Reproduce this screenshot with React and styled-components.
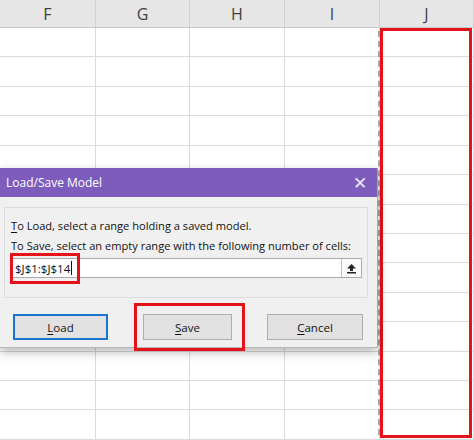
import React from 'react';
import styled, { createGlobalStyle } from 'styled-components';

const GlobalStyle = createGlobalStyle`
  html, body { margin: 0; padding: 0; background: #fff; overflow: hidden; }
  * { box-sizing: border-box; }
`;

const columns = ['F', 'G', 'H', 'I', 'J'];
const colTemplate = '96px 94px 95px 95px 94px';
const ROWS = 14;

const Sheet = styled.div`
  position: relative;
  width: 474px;
  height: 440px;
  overflow: hidden;
  font-family: "Open Sans", "Noto Sans", sans-serif;
`;

const HeaderRow = styled.div`
  display: grid;
  grid-template-columns: ${colTemplate};
  height: 28px;
  background: #e6e6e6;
  border-bottom: 1px solid #c9c9c9;
`;

const HeaderCell = styled.div`
  display: flex;
  align-items: center;
  justify-content: center;
  border-right: 1px solid #d2d2d2;
  font-size: 16px;
  color: #404040;
`;

const Grid = styled.div`
  display: grid;
  grid-template-columns: ${colTemplate};
  grid-auto-rows: 29.43px;
`;

const Cell = styled.div`
  border-right: 1px solid #dadada;
  border-bottom: 1px solid #dadada;
`;

const Selection = styled.div`
  position: absolute;
  left: 380px;
  top: 28px;
  width: 92px;
  height: 410px;
  border: 3px solid #e5121a;
  &::before {
    content: '';
    position: absolute;
    left: -5px;
    top: 0;
    bottom: 0;
    border-left: 2px dashed #b0a0a0;
  }
`;

const Dialog = styled.div`
  position: absolute;
  left: 0;
  top: 168px;
  width: 378px;
  height: 180px;
  background: #f0f0f0;
  border-right: 1px solid #a89cc0;
  border-bottom: 1px solid #b8b8b8;
  box-shadow: 0 4px 10px rgba(0, 0, 0, 0.28);
  font-family: "Open Sans", "Noto Sans", sans-serif;
  font-size: 11.1px;
  color: #111;
`;

const TitleBar = styled.div`
  display: flex;
  align-items: center;
  justify-content: space-between;
  height: 29px;
  padding: 0 10px 0 6px;
  background: #7d5cbd;
  color: #fff;
  font-size: 12px;
`;

const Close = styled.span`
  font-size: 17px;
  line-height: 1;
  color: #ece6f7;
`;

const Group = styled.div`
  margin: 10px 9px 0 4px;
  padding: 8px 5px 19px 6px;
  border: 1px solid #dcdcdc;
`;

const Line = styled.div`
  height: 20px;
  line-height: 20px;
  white-space: nowrap;
`;

const Key = styled.span`
  text-decoration: underline;
  text-underline-offset: 2px;
`;

const InputRow = styled.div`
  display: flex;
  height: 20px;
  margin-top: 2px;
  background: #fff;
  border: 1px solid #aaa;
`;

const InputText = styled.div`
  flex: 1;
  display: flex;
  align-items: center;
  padding-left: 3px;
  font-size: 11.5px;
  color: #111;
`;

const Caret = styled.span`
  display: inline-block;
  width: 1px;
  height: 14px;
  margin-left: 1px;
  background: #111;
`;

const PickButton = styled.div`
  width: 20px;
  display: flex;
  align-items: center;
  justify-content: center;
  border-left: 1px solid #c4c4c4;
  background: #fafafa;
`;

const ButtonRow = styled.div`
  display: flex;
  gap: 35px;
  margin-top: 16px;
  padding-left: 13px;
`;

const Button = styled.div`
  width: ${p => p.$w}px;
  height: 26px;
  display: flex;
  align-items: center;
  justify-content: center;
  background: #e1e1e1;
  border: ${p => (p.$focus ? '2px solid #1a74d2' : '1px solid #adadad')};
  font-size: 11.5px;
  color: #111;
`;

const Mark = styled.div`
  position: absolute;
  border: 3px solid #e5121a;
  pointer-events: none;
`;

export default function App() {
  return (
    <>
      <GlobalStyle />
      <Sheet>
        <HeaderRow>
          {columns.map(c => (
            <HeaderCell key={c}>{c}</HeaderCell>
          ))}
        </HeaderRow>
        <Grid>
          {Array.from({ length: ROWS * columns.length }).map((_, i) => (
            <Cell key={i} />
          ))}
        </Grid>
        <Selection />

        <Dialog>
          <TitleBar>
            <span>Load/Save Model</span>
            <Close>✕</Close>
          </TitleBar>
          <Group>
            <Line><Key>T</Key>o Load, select a range holding a saved model.</Line>
            <Line>To Save, select an empty range with the following number of cells:</Line>
            <InputRow>
              <InputText>$J$1:$J$14<Caret /></InputText>
              <PickButton>
                <svg width="11" height="11" viewBox="0 0 11 11">
                  <path d="M5.5 1 L10 5.5 H7 V8 H4 V5.5 H1 Z" fill="#222" />
                  <rect x="1" y="9" width="9" height="1.5" fill="#222" />
                </svg>
              </PickButton>
            </InputRow>
          </Group>
          <ButtonRow>
            <Button $w={95} $focus><Key>L</Key>oad</Button>
            <Button $w={89}><Key>S</Key>ave</Button>
            <Button $w={96}><Key>C</Key>ancel</Button>
          </ButtonRow>
          <Mark style={{ left: 10, top: 85, width: 70, height: 31 }} />
          <Mark style={{ left: 134, top: 135, width: 111, height: 48 }} />
        </Dialog>
      </Sheet>
    </>
  );
}
